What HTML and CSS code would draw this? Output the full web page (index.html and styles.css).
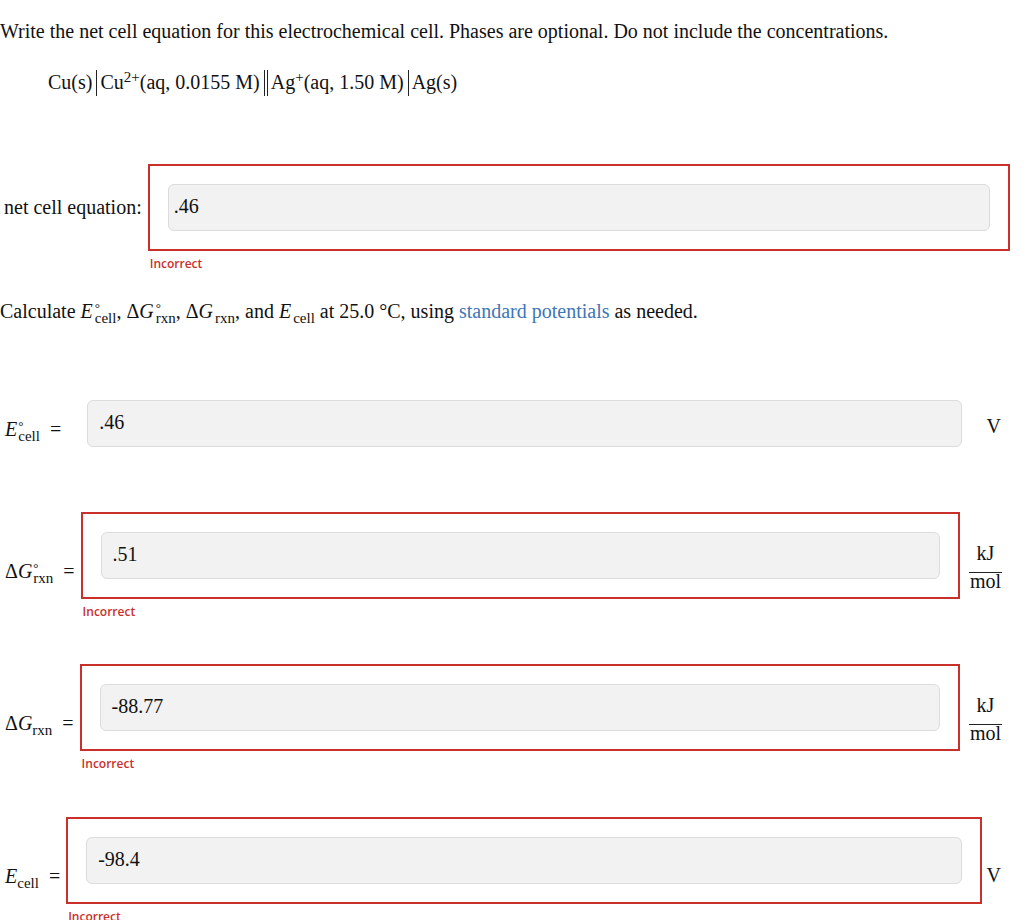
FILE: index.html
```html
<!DOCTYPE html>
<html>
<head>
<meta charset="utf-8">
<link rel="stylesheet" href="styles.css">
</head>
<body>
<p class="prompt">Write the net cell equation for this electrochemical cell. Phases are optional. Do not include the concentrations.</p>
<p class="cellnote">Cu(s)<span class="bar"></span>Cu<sup>2+</sup>(aq, 0.0155 M)<span class="dbar"></span>Ag<sup>+</sup>(aq, 1.50 M)<span class="bar"></span>Ag(s)</p>

<div class="qrow qrow-net">
  <div class="label label-net">net cell equation:</div>
  <div class="box wrong"><div class="field field-net">.46</div></div>
  <div class="unit"></div>
  <div class="feedback">Incorrect</div>
</div>

<p class="calc">Calculate <i>E</i><span class="ss"><span class="sup">°</span><span class="sub">cell</span></span>, Δ<i>G</i><span class="ss"><span class="sup">°</span><span class="sub">rxn</span></span>, Δ<i>G</i><span class="sub1">rxn</span>, and <i>E</i><span class="sub1">cell</span> at 25.0 °C, using <a class="link">standard potentials</a> as needed.</p>

<div class="qrow qrow-e0">
  <div class="label label-low1"><i>E</i><span class="ss"><span class="sup">°</span><span class="sub">cell</span></span><span class="eq">=</span></div>
  <div class="box"><div class="field">.46</div></div>
  <div class="unit unit-v1">V</div>
</div>

<div class="qrow qrow-g0">
  <div class="label label-low2">Δ<i>G</i><span class="ss"><span class="sup">°</span><span class="sub">rxn</span></span><span class="eq">=</span></div>
  <div class="box wrong"><div class="field">.51</div></div>
  <div class="unit unit-frac"><span class="frac"><span class="num">kJ</span><span class="den">mol</span></span></div>
  <div class="feedback">Incorrect</div>
</div>

<div class="qrow qrow-g">
  <div class="label label-low2">Δ<i>G</i><span class="sub1">rxn</span><span class="eq">=</span></div>
  <div class="box wrong"><div class="field">-88.77</div></div>
  <div class="unit unit-frac"><span class="frac"><span class="num">kJ</span><span class="den">mol</span></span></div>
  <div class="feedback">Incorrect</div>
</div>

<div class="qrow qrow-e">
  <div class="label label-low2"><i>E</i><span class="sub1">cell</span><span class="eq">=</span></div>
  <div class="box wrong"><div class="field">-98.4</div></div>
  <div class="unit unit-v2">V</div>
  <div class="feedback">Incorrect</div>
</div>
</body>
</html>
```

FILE: styles.css
```css
html, body {
  margin: 0;
  padding: 0;
  background: #fff;
}
body {
  font-family: "Liberation Serif", "Times New Roman", serif;
  font-size: 20px;
  line-height: 23px;
  color: #111;
  width: 1024px;
  height: 920px;
  overflow: hidden;
}
p { margin: 0; }
.prompt {
  margin-top: 20px;
  white-space: nowrap;
}
.cellnote {
  margin-top: 27px;
  padding-left: 48px;
  white-space: nowrap;
}
.cellnote sup {
  font-size: 15px;
  line-height: 0;
  vertical-align: 7px;
}
.bar {
  display: inline-block;
  width: 0;
  height: 26px;
  border-left: 1.3px solid #222;
  vertical-align: -7px;
  margin: 0 3px 0 4px;
}
.dbar {
  display: inline-block;
  width: 2px;
  height: 26px;
  border-left: 1.3px solid #222;
  border-right: 1.3px solid #222;
  vertical-align: -7px;
  margin: 0 3px 0 4px;
}

.qrow {
  display: grid;
  grid-template-columns: auto 1fr auto;
  align-items: center;
}
.qrow-net { margin-top: 68px; margin-right: 14px; }
.qrow-e0 { margin-top: 56px; }
.qrow-g0 { margin-top: 45px; }
.qrow-g { margin-top: 44px; }
.qrow-e { margin-top: 45px; }

.label {
  white-space: nowrap;
  padding: 0 6px 0 5px;
}
.label .sub1 { margin-left: 0; }
.label .ss { margin-left: 1px; }
.label-net {
  padding: 0 6px 0 4px;
}
.label-low1 { margin-top: 12px; }
.label-low2 { margin-top: 32px; }

.eq {
  display: inline-block;
  margin-left: 10px;
}

.box {
  border: 2px solid transparent;
  padding: 18px;
}
.box.wrong {
  border-color: #c9302c;
}
.field {
  background: #f2f2f2;
  border: 1px solid #dcdcdc;
  border-radius: 6px;
  display: flex;
  align-items: center;
  padding-left: 11px;
  padding-bottom: 2px;
  height: 43px;
}
.field-net {
  padding-left: 5px;
}

.unit {
  text-align: center;
}
.qrow-net .unit { padding: 0; }
.unit-v1 { margin-top: 6px; padding-left: 5px; padding-right: 23px; }
.unit-v2 { margin-top: 30px; padding-left: 5px; padding-right: 23px; }
.unit-frac { margin-top: 20px; padding-left: 9px; padding-right: 22px; }

.frac {
  display: inline-flex;
  flex-direction: column;
  align-items: stretch;
  text-align: center;
}
.num {
  line-height: 22px;
  padding-bottom: 8px;
}
.den {
  line-height: 17px;
  border-top: 1px solid #222;
  padding: 0 1px;
}

.feedback {
  grid-column: 2;
  font-family: "Open Sans", "Noto Sans", sans-serif;
  font-weight: 600;
  font-size: 12px;
  line-height: 16px;
  color: #c9302c;
  padding-left: 2px;
  margin-top: 5px;
}

.calc {
  margin-top: 28px;
  white-space: nowrap;
}
.link {
  color: #4076b4;
  text-decoration: none;
}
.ss {
  display: inline-block;
  font-size: 15px;
  line-height: 11px;
  vertical-align: -5px;
  margin-left: 2px;
}
.ss .sup {
  display: block;
  font-size: 13px;
}
.ss .sub {
  display: block;
}
.sub1 {
  font-size: 15px;
  line-height: 0;
  vertical-align: -5px;
  margin-left: 2px;
}
```
